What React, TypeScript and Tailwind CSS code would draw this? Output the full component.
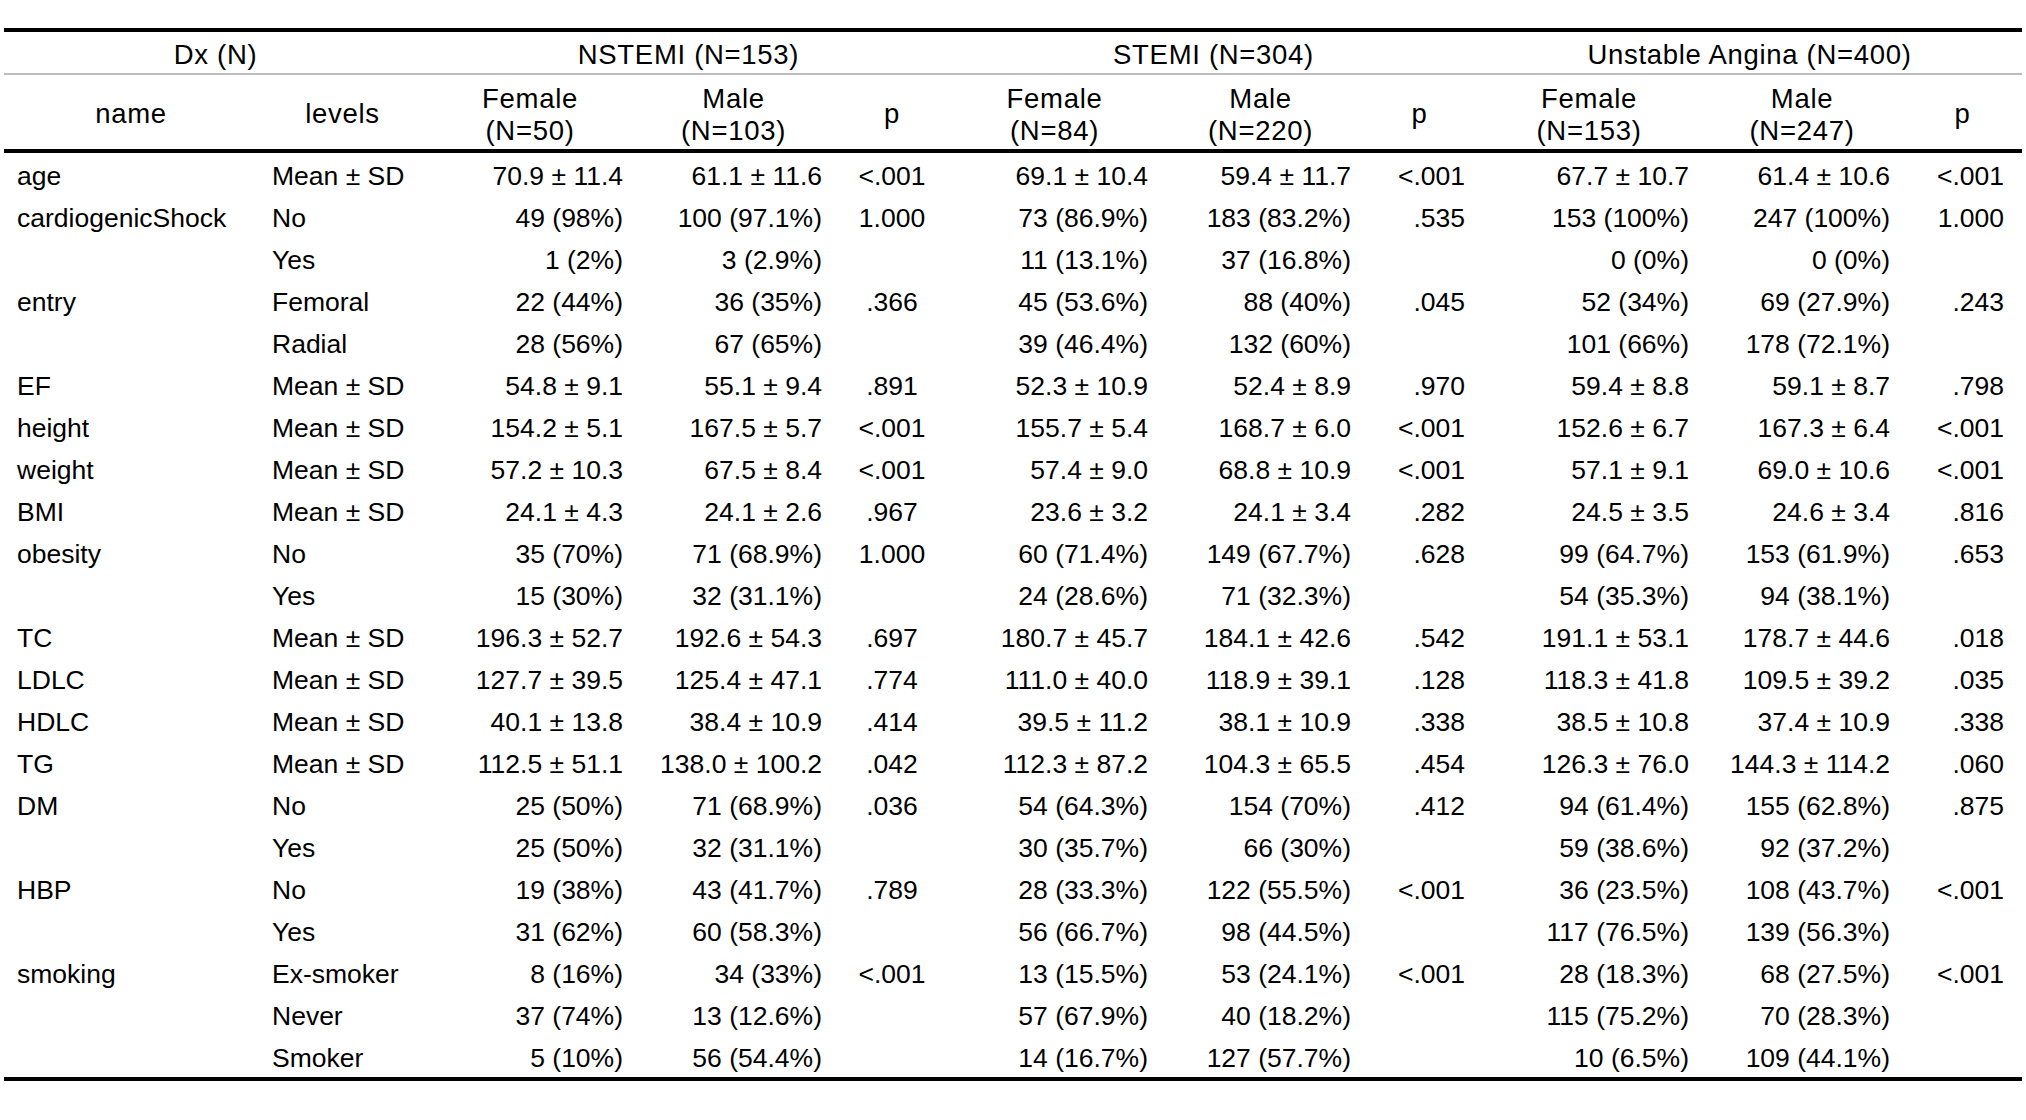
import React from "react";

const rows: string[][] = [
  ["age", "Mean ± SD", "70.9 ± 11.4", "61.1 ± 11.6", "<.001", "69.1 ± 10.4", "59.4 ± 11.7", "<.001", "67.7 ± 10.7", "61.4 ± 10.6", "<.001"],
  ["cardiogenicShock", "No", "49 (98%)", "100 (97.1%)", "1.000", "73 (86.9%)", "183 (83.2%)", ".535", "153 (100%)", "247 (100%)", "1.000"],
  ["", "Yes", "1 (2%)", "3 (2.9%)", "", "11 (13.1%)", "37 (16.8%)", "", "0 (0%)", "0 (0%)", ""],
  ["entry", "Femoral", "22 (44%)", "36 (35%)", ".366", "45 (53.6%)", "88 (40%)", ".045", "52 (34%)", "69 (27.9%)", ".243"],
  ["", "Radial", "28 (56%)", "67 (65%)", "", "39 (46.4%)", "132 (60%)", "", "101 (66%)", "178 (72.1%)", ""],
  ["EF", "Mean ± SD", "54.8 ± 9.1", "55.1 ± 9.4", ".891", "52.3 ± 10.9", "52.4 ± 8.9", ".970", "59.4 ± 8.8", "59.1 ± 8.7", ".798"],
  ["height", "Mean ± SD", "154.2 ± 5.1", "167.5 ± 5.7", "<.001", "155.7 ± 5.4", "168.7 ± 6.0", "<.001", "152.6 ± 6.7", "167.3 ± 6.4", "<.001"],
  ["weight", "Mean ± SD", "57.2 ± 10.3", "67.5 ± 8.4", "<.001", "57.4 ± 9.0", "68.8 ± 10.9", "<.001", "57.1 ± 9.1", "69.0 ± 10.6", "<.001"],
  ["BMI", "Mean ± SD", "24.1 ± 4.3", "24.1 ± 2.6", ".967", "23.6 ± 3.2", "24.1 ± 3.4", ".282", "24.5 ± 3.5", "24.6 ± 3.4", ".816"],
  ["obesity", "No", "35 (70%)", "71 (68.9%)", "1.000", "60 (71.4%)", "149 (67.7%)", ".628", "99 (64.7%)", "153 (61.9%)", ".653"],
  ["", "Yes", "15 (30%)", "32 (31.1%)", "", "24 (28.6%)", "71 (32.3%)", "", "54 (35.3%)", "94 (38.1%)", ""],
  ["TC", "Mean ± SD", "196.3 ± 52.7", "192.6 ± 54.3", ".697", "180.7 ± 45.7", "184.1 ± 42.6", ".542", "191.1 ± 53.1", "178.7 ± 44.6", ".018"],
  ["LDLC", "Mean ± SD", "127.7 ± 39.5", "125.4 ± 47.1", ".774", "111.0 ± 40.0", "118.9 ± 39.1", ".128", "118.3 ± 41.8", "109.5 ± 39.2", ".035"],
  ["HDLC", "Mean ± SD", "40.1 ± 13.8", "38.4 ± 10.9", ".414", "39.5 ± 11.2", "38.1 ± 10.9", ".338", "38.5 ± 10.8", "37.4 ± 10.9", ".338"],
  ["TG", "Mean ± SD", "112.5 ± 51.1", "138.0 ± 100.2", ".042", "112.3 ± 87.2", "104.3 ± 65.5", ".454", "126.3 ± 76.0", "144.3 ± 114.2", ".060"],
  ["DM", "No", "25 (50%)", "71 (68.9%)", ".036", "54 (64.3%)", "154 (70%)", ".412", "94 (61.4%)", "155 (62.8%)", ".875"],
  ["", "Yes", "25 (50%)", "32 (31.1%)", "", "30 (35.7%)", "66 (30%)", "", "59 (38.6%)", "92 (37.2%)", ""],
  ["HBP", "No", "19 (38%)", "43 (41.7%)", ".789", "28 (33.3%)", "122 (55.5%)", "<.001", "36 (23.5%)", "108 (43.7%)", "<.001"],
  ["", "Yes", "31 (62%)", "60 (58.3%)", "", "56 (66.7%)", "98 (44.5%)", "", "117 (76.5%)", "139 (56.3%)", ""],
  ["smoking", "Ex-smoker", "8 (16%)", "34 (33%)", "<.001", "13 (15.5%)", "53 (24.1%)", "<.001", "28 (18.3%)", "68 (27.5%)", "<.001"],
  ["", "Never", "37 (74%)", "13 (12.6%)", "", "57 (67.9%)", "40 (18.2%)", "", "115 (75.2%)", "70 (28.3%)", ""],
  ["", "Smoker", "5 (10%)", "56 (54.4%)", "", "14 (16.7%)", "127 (57.7%)", "", "10 (6.5%)", "109 (44.1%)", ""],
];

const colClass: string[] = [
  "pl-[13px] text-left",
  "pl-[14px] text-left",
  "pr-[10px] text-right",
  "pr-[12px] text-right",
  "text-center",
  "pr-[11px] text-right",
  "pr-[11px] text-right",
  "pr-[12px] text-right",
  "pr-[12px] text-right",
  "pr-[13px] text-right",
  "pr-[18px] text-right",
];

const groups = [
  { label: "NSTEMI (N=153)", f: "(N=50)", m: "(N=103)" },
  { label: "STEMI (N=304)", f: "(N=84)", m: "(N=220)" },
  { label: "Unstable Angina (N=400)", f: "(N=153)", m: "(N=247)" },
];

const hdr = "text-[27.5px] tracking-[0.7px]";

export default function App() {
  return (
    <div className="w-[2026px] h-[1120px] bg-white text-black" style={{ fontFamily: '"Liberation Sans", Arial, Helvetica, sans-serif' }}>
      <div className="pt-[28px] pl-[4px]">
        <div className="grid grid-cols-[254px_169px_206px_201px_116px_209px_203px_115px_224px_202px_119px] w-[2018px] text-[26.5px]">
          <div className="col-span-full h-[4px] bg-black" />
          <div className={"col-span-2 h-[41px] pt-[4px] leading-[37px] text-center " + hdr}>Dx (N)</div>
          {groups.map((g) => (
            <div key={g.label} className={"col-span-3 h-[41px] pt-[4px] leading-[37px] text-center " + hdr}>
              {g.label}
            </div>
          ))}
          <div className="col-span-full h-[2px] bg-[#bdbdbd]" />
          <div className={"h-[74px] pt-[4px] flex items-center justify-center " + hdr}>name</div>
          <div className={"h-[74px] pt-[4px] flex items-center justify-center " + hdr}>levels</div>
          {groups.map((g) => (
            <React.Fragment key={g.label}>
              <div className={"h-[74px] pt-[5px] flex flex-col items-center justify-center leading-[32px] " + hdr}>
                <span>Female</span>
                <span>{g.f}</span>
              </div>
              <div className={"h-[74px] pt-[5px] flex flex-col items-center justify-center leading-[32px] " + hdr}>
                <span>Male</span>
                <span>{g.m}</span>
              </div>
              <div className={"h-[74px] pt-[4px] flex items-center justify-center " + hdr}>p</div>
            </React.Fragment>
          ))}
          <div className="col-span-full h-[4px] bg-black" />
          {rows.map((r, ri) => (
            <React.Fragment key={ri}>
              {r.map((c, ci) => (
                <div key={ci} className={"h-[42px] pt-[4px] leading-[38px] whitespace-nowrap " + colClass[ci]}>
                  {c}
                </div>
              ))}
            </React.Fragment>
          ))}
          <div className="col-span-full h-[4px] bg-black" />
        </div>
      </div>
    </div>
  );
}
